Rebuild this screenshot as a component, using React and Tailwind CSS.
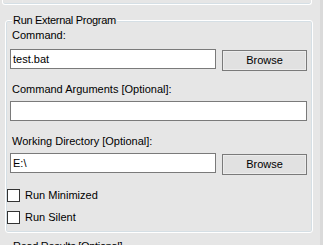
import React from "react";

const font = { fontFamily: '"Liberation Sans", Arial, sans-serif' };

const TextBox = ({ value, className = "" }) => (
  <div
    className={`h-[20px] border border-[#7a7a7a] bg-white flex items-center pl-[2px] text-[11px] leading-[13px] text-black ${className}`}
  >
    {value}
  </div>
);

const BrowseButton = () => (
  <button className="mt-[1px] w-[85px] h-[21px] border border-[#7a7a7a] bg-[#e1e1e1] shadow-[inset_0_0_0_1px_#ececec] text-[11px] leading-[13px] text-black flex items-center justify-center">
    Browse
  </button>
);

const CheckBox = ({ label, className = "" }) => (
  <label className={`flex items-center ml-[1px] ${className}`}>
    <span className="w-[13px] h-[13px] border border-[#333333] bg-white" />
    <span className="ml-[5px] text-[11px] leading-[13px] text-black">{label}</span>
  </label>
);

export default function App() {
  return (
    <div
      className="w-[323px] h-[245px] overflow-hidden bg-[#e6e6e6] flex select-none"
      style={font}
    >
      <div className="w-[320px]">
        {/* bottom of previous group */}
        <div className="ml-[2px] w-[310px] h-[5px] border-x border-b border-white shadow-[inset_0_-1px_0_#d5dfe5] rounded-b-[3px]" />

        {/* Run External Program */}
        <div className="relative mt-[15px] ml-[5px] w-[308px] border border-white shadow-[inset_0_0_0_1px_#d5dfe5] rounded-[3px] pb-[8px]">
          <span className="absolute -top-[7px] left-[6px] px-[1px] bg-[#e6e6e6] text-[11px] leading-[13px] tracking-[-0.3px] text-black">
            Run External Program
          </span>

          <div className="mt-[8px] ml-[6px] text-[11px] leading-[13px] text-black">
            Command:
          </div>
          <div className="mt-[7px] ml-[4px] flex items-start gap-[6px]">
            <TextBox value="test.bat" className="w-[206px]" />
            <BrowseButton />
          </div>

          <div className="mt-[12px] ml-[6px] text-[11px] leading-[13px] text-black">
            Command Arguments [Optional]:
          </div>
          <TextBox value="" className="mt-[5px] ml-[4px] w-[297px]" />

          <div className="mt-[14px] ml-[6px] text-[11px] leading-[13px] text-black">
            Working Directory [Optional]:
          </div>
          <div className="mt-[5px] ml-[4px] flex items-start gap-[6px]">
            <TextBox value="E:\" className="w-[206px]" />
            <BrowseButton />
          </div>

          <CheckBox label="Run Minimized" className="mt-[14px]" />
          <CheckBox label="Run Silent" className="mt-[9px]" />
        </div>

        {/* next group, cut off */}
        <div className="relative mt-[13px] ml-[5px] w-[308px] h-[40px] border border-white rounded-[3px]">
          <span className="absolute -top-[7px] left-[6px] px-[1px] bg-[#e6e6e6] text-[11px] leading-[13px] tracking-[-0.3px] text-black">
            Read Results [Optional]
          </span>
        </div>
      </div>
      <div className="w-[3px] h-full bg-[#dadada]" />
    </div>
  );
}
